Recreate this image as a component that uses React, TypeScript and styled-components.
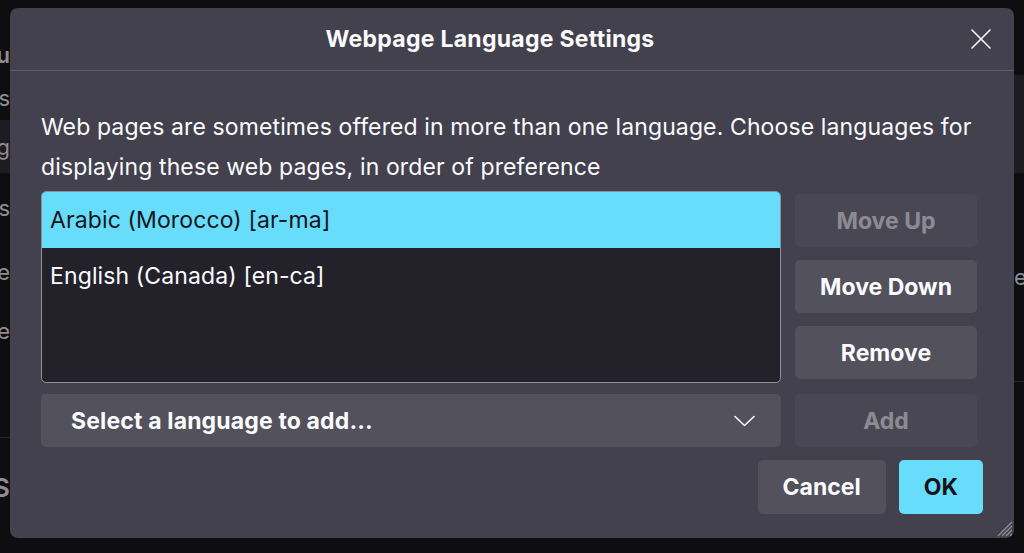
import React from 'react'
import styled, { createGlobalStyle } from 'styled-components'

type Language = {
  label: string
  code: string
}

const languages: Language[] = [
  { label: 'Arabic (Morocco)', code: 'ar-ma' },
  { label: 'English (Canada)', code: 'en-ca' },
]

const leftRows = [
  { h: 35, text: '' },
  { h: 40, text: 'Menu', bold: true },
  { h: 45, text: 'Tabs' },
  { h: 53, text: 'Browsing', band: true },
  { h: 70, text: 'Fonts' },
  { h: 58, text: 'Choose' },
  { h: 60, text: 'Online' },
  { h: 76, text: '' },
  { h: 100, text: 'HTTPS', line: true, big: true },
  { h: 16, text: '' },
]

const rightRows = [
  { h: 75, text: '' },
  { h: 98, text: '', band: true },
  { h: 208, text: 'ea' },
  { h: 172, text: '', line: true },
]

export default function App() {
  return (
    <>
      <GlobalStyle />
      <Page>
        <Strip>
          {leftRows.map((row, i) => (
            <BgRow key={i} $h={row.h} $band={row.band} $line={row.line} $big={row.big} $bold={row.bold} $side="left">
              {row.text}
            </BgRow>
          ))}
        </Strip>
        <Strip>
          {rightRows.map((row, i) => (
            <BgRow key={i} $h={row.h} $band={row.band} $line={row.line} $side="right">
              {row.text}
            </BgRow>
          ))}
        </Strip>

        <Dialog>
          <Header>
            <Title>Webpage Language Settings</Title>
            <CloseButton aria-label="Close">
              <svg width="20" height="20" viewBox="0 0 20 20">
                <path d="M1 1 L19 19 M19 1 L1 19" stroke="#fbfbfe" strokeWidth="1.6" strokeLinecap="round" />
              </svg>
            </CloseButton>
          </Header>

          <Body>
            <Description>
              Web pages are sometimes offered in more than one language. Choose languages for
              displaying these web pages, in order of preference
            </Description>

            <Editor>
              <ListBox>
                {languages.map((lang, index) => (
                  <ListItem key={lang.code} $selected={index === 0}>
                    {lang.label} [{lang.code}]
                  </ListItem>
                ))}
              </ListBox>

              <ButtonStack>
                <Button disabled>Move Up</Button>
                <Button>Move Down</Button>
                <Button>Remove</Button>
              </ButtonStack>

              <Select>
                <span>Select a language to add...</span>
                <svg width="21" height="12" viewBox="0 0 21 12">
                  <path d="M1 1.5 L10.5 10.5 L20 1.5" fill="none" stroke="#fbfbfe" strokeWidth="1.6" strokeLinecap="round" strokeLinejoin="round" />
                </svg>
              </Select>
              <Button disabled>Add</Button>
            </Editor>

            <Footer>
              <Button $wide>Cancel</Button>
              <Button $primary $wide>OK</Button>
            </Footer>
          </Body>

          <Grip viewBox="0 0 20 20" width="20" height="20">
            <path d="M19 5 L5 19 M19 9 L9 19 M19 13 L13 19 M19 17 L17 19" stroke="#8f8e99" strokeWidth="1.2" />
          </Grip>
        </Dialog>
      </Page>
    </>
  )
}

const GlobalStyle = createGlobalStyle`
  html, body {
    margin: 0;
    padding: 0;
    background: #0e0e11;
  }

  body {
    font-family: Inter, "Noto Sans", sans-serif;
    color: #fbfbfe;
    -webkit-font-smoothing: antialiased;
  }

  * {
    box-sizing: border-box;
  }
`

const Page = styled.div`
  position: relative;
  width: 1024px;
  height: 553px;
  overflow: hidden;
  background: #0e0e11;
  display: flex;
  justify-content: space-between;
`

const Strip = styled.div`
  width: 10px;
  display: flex;
  flex-direction: column;
  overflow: hidden;
`

const BgRow = styled.div<{ $h: number; $band?: boolean; $line?: boolean; $big?: boolean; $bold?: boolean; $side: 'left' | 'right' }>`
  height: ${p => p.$h}px;
  flex-shrink: 0;
  display: flex;
  align-items: center;
  justify-content: ${p => (p.$side === 'left' ? 'flex-end' : 'flex-start')};
  white-space: nowrap;
  background: ${p => (p.$band ? '#1d1c22' : 'transparent')};
  border-top: ${p => (p.$line ? '1px solid #26252b' : '0')};
  color: #8e8d94;
  font-size: ${p => (p.$big ? '26px' : '22px')};
  font-weight: ${p => (p.$bold || p.$big ? 600 : 400)};
`

const Dialog = styled.section`
  position: absolute;
  left: 10px;
  top: 8px;
  width: 1004px;
  height: 530px;
  background: #42414d;
  border-radius: 8px;
  display: flex;
  flex-direction: column;
  overflow: hidden;
`

const Header = styled.header`
  height: 63px;
  flex-shrink: 0;
  display: flex;
  align-items: center;
  border-bottom: 1px solid #5d5c67;
`

const Title = styled.h1`
  flex: 1;
  margin: 0;
  padding-left: 9px;
  text-align: center;
  font-size: 23px;
  font-weight: 700;
  letter-spacing: 0.28px;
  color: #fbfbfe;
`

const CloseButton = styled.button`
  width: 40px;
  height: 40px;
  margin-right: 13px;
  padding: 0;
  border: 0;
  background: none;
  display: flex;
  align-items: center;
  justify-content: center;
`

const Body = styled.div`
  padding: 0 31px;
  display: flex;
  flex-direction: column;
`

const Description = styled.p`
  margin: 36px 0 4px;
  font-size: 23px;
  line-height: 40px;
  letter-spacing: 0.12px;
  color: #fbfbfe;
`

const Editor = styled.div`
  display: grid;
  grid-template-columns: 740px 182px;
  column-gap: 14px;
  row-gap: 11px;
`

const ListBox = styled.ul`
  margin: 0;
  padding: 0;
  list-style: none;
  height: 192px;
  background: #23222b;
  border: 1px solid #8f8f9d;
  border-radius: 5px;
  overflow: hidden;
`

const ListItem = styled.li<{ $selected?: boolean }>`
  height: 56px;
  display: flex;
  align-items: center;
  padding-left: 8px;
  font-size: 23px;
  letter-spacing: 0.12px;
  background: ${p => (p.$selected ? '#67dcfb' : 'transparent')};
  color: ${p => (p.$selected ? '#15141a' : '#fbfbfe')};
`

const ButtonStack = styled.div`
  display: flex;
  flex-direction: column;
  gap: 13px;
  padding-top: 3px;
`

const Button = styled.button<{ $primary?: boolean; $wide?: boolean }>`
  height: 53px;
  padding: 0 ${p => (p.$wide ? '25px' : '0')};
  border: 0;
  border-radius: 5px;
  font-family: inherit;
  font-size: 23px;
  font-weight: 700;
  background: ${p => (p.$primary ? '#67dcfb' : '#52515c')};
  color: ${p => (p.$primary ? '#15141a' : '#fbfbfe')};

  &:disabled {
    opacity: 0.4;
  }
`

const Select = styled.div`
  height: 53px;
  display: flex;
  align-items: center;
  justify-content: space-between;
  padding: 0 26px 0 30px;
  border-radius: 5px;
  background: #52515c;
  font-size: 23px;
  font-weight: 700;
  letter-spacing: 0.15px;
`

const Footer = styled.div`
  display: flex;
  justify-content: flex-end;
  gap: 13px;
  margin-top: 13px;

  button {
    height: 54px;
  }
`

const Grip = styled.svg`
  position: absolute;
  right: 1px;
  bottom: 1px;
`
